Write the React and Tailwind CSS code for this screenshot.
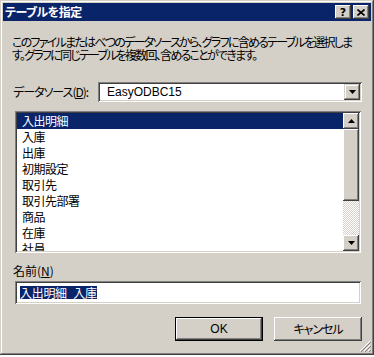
const sunken =
  'shadow-[inset_1px_1px_#808080,inset_-1px_-1px_#fff,inset_2px_2px_#404040,inset_-2px_-2px_#d4d0c8]'
const raised =
  'shadow-[inset_-1px_-1px_#404040,inset_1px_1px_#fff,inset_-2px_-2px_#808080,inset_2px_2px_#d4d0c8]'

function Arrow({ up }) {
  return (
    <svg width="7" height="4" viewBox="0 0 7 4">
      {up ? <path d="M3.5 0 L7 4 L0 4 Z" fill="#000" /> : <path d="M0 0 L7 0 L3.5 4 Z" fill="#000" />}
    </svg>
  )
}

function ScrollBtn({ up }) {
  return (
    <div className={`w-[16px] h-[16px] bg-[#d4d0c8] flex items-center justify-center ${raised}`}>
      <Arrow up={up} />
    </div>
  )
}

export default function App() {
  const items = ['入出明細', '入庫', '出庫', '初期設定', '取引先', '取引先部署', '商品', '在庫', '社員']

  return (
    <div className="w-[374px] h-[357px] overflow-hidden bg-white text-black text-[12px] font-['Noto_Sans_CJK_JP',sans-serif] [font-feature-settings:'palt']">
      <div className="w-[374px] h-[355px] bg-[#d4d0c8] p-[3px] flex flex-col shadow-[inset_-1px_-1px_#404040,inset_1px_1px_#d4d0c8,inset_-2px_-2px_#808080,inset_2px_2px_#fff] relative">
        {/* title bar */}
        <div className="h-[18px] bg-[#0a246a] flex items-center pl-[2px] pr-[2px]">
          <span className="text-white font-bold text-[12px] leading-[14px] tracking-[-0.5px]">テーブルを指定</span>
          <div className="ml-auto flex gap-[2px]">
            <div className={`w-[16px] h-[14px] bg-[#d4d0c8] flex items-center justify-center ${raised}`}>
              <span className="font-['DejaVu_Sans',sans-serif] font-bold text-[11px] leading-[11px]">?</span>
            </div>
            <div className={`w-[16px] h-[14px] bg-[#d4d0c8] flex items-center justify-center ${raised}`}>
              <svg width="8" height="7" viewBox="0 0 8 7">
                <path d="M0.5 0.5 L7.5 6.5 M7.5 0.5 L0.5 6.5" stroke="#000" strokeWidth="1.6" />
              </svg>
            </div>
          </div>
        </div>

        <div className="flex flex-col px-[9px]">
          {/* description */}
          <p className="mt-[14px] leading-[13px] whitespace-nowrap tracking-[-1.75px]">
            このファイルまたはべつのデータソースから、グラフに含めるテーブルを選択しま
            <br />
            す。グラフに同じテーブルを複数回、含めることができます。
          </p>

          {/* data source */}
          <div className="mt-[21px] flex items-center h-[20px]">
            <span className="ml-[1px] w-[85px] leading-[14px] whitespace-nowrap tracking-[-1px]">
              データソース(<span className="underline">D</span>):
            </span>
            <div className={`w-[264px] h-[20px] bg-white flex items-center p-[2px] ${sunken}`}>
              <span className="pl-[7px] font-['Liberation_Sans',sans-serif] text-[12px]">EasyODBC15</span>
              <div className="ml-auto w-[16px] h-[16px] bg-[#d4d0c8] flex items-center justify-center shadow-[inset_-1px_-1px_#404040,inset_1px_1px_#d4d0c8,inset_-2px_-2px_#808080,inset_2px_2px_#fff]">
                <Arrow />
              </div>
            </div>
          </div>

          {/* list box */}
          <div className={`mt-[9px] ml-[3px] w-[346px] h-[142px] bg-white p-[2px] flex ${sunken}`}>
            <div className="flex-1 overflow-hidden">
              {items.map((it, i) => (
                <div
                  key={it}
                  className={`h-[16px] leading-[16px] pl-[5px] tracking-[-0.5px] ${i === 0 ? 'bg-[#0a246a] text-white' : ''}`}
                >
                  {it}
                </div>
              ))}
            </div>
            <div className="w-[16px] flex flex-col">
              <ScrollBtn up />
              <div className={`h-[72px] bg-[#d4d0c8] ${raised}`} />
              <div className="flex-1 bg-[repeating-conic-gradient(#d4d0c8_0_25%,#fff_0_50%)] bg-[length:2px_2px]" />
              <ScrollBtn />
            </div>
          </div>

          {/* name */}
          <div className="mt-[12px] ml-[1px] leading-[12px]">
            名前(<span className="underline">N</span>)
          </div>
          <div className={`mt-[4px] ml-[3px] w-[346px] h-[23px] bg-white flex items-center p-[2px] ${sunken}`}>
            <span className="ml-[3px] bg-[#0a246a] text-white leading-[13px] tracking-[-0.3px]">入出明細_入庫</span>
          </div>

          {/* buttons */}
          <div className="mt-[13px] flex justify-end gap-[11px]">
            <button className="w-[88px] h-[24px] bg-[#d4d0c8] border border-black flex items-center justify-center shadow-[inset_-1px_-1px_#404040,inset_1px_1px_#fff,inset_-2px_-2px_#808080]">
              <span className="font-['Liberation_Sans',sans-serif] text-[12px]">OK</span>
            </button>
            <button className={`w-[88px] h-[24px] bg-[#d4d0c8] flex items-center justify-center tracking-[-1px] ${raised}`}>
              キャンセル
            </button>
          </div>
        </div>

        {/* size grip */}
        <svg className="absolute right-[3px] bottom-[3px]" width="12" height="12" viewBox="0 0 12 12">
          <path d="M11 1 L1 11 M11 5 L5 11 M11 9 L9 11" stroke="#fff" strokeWidth="1" />
          <path d="M12 2 L2 12 M12 6 L6 12 M12 10 L10 12" stroke="#808080" strokeWidth="1" />
        </svg>
      </div>
    </div>
  )
}
